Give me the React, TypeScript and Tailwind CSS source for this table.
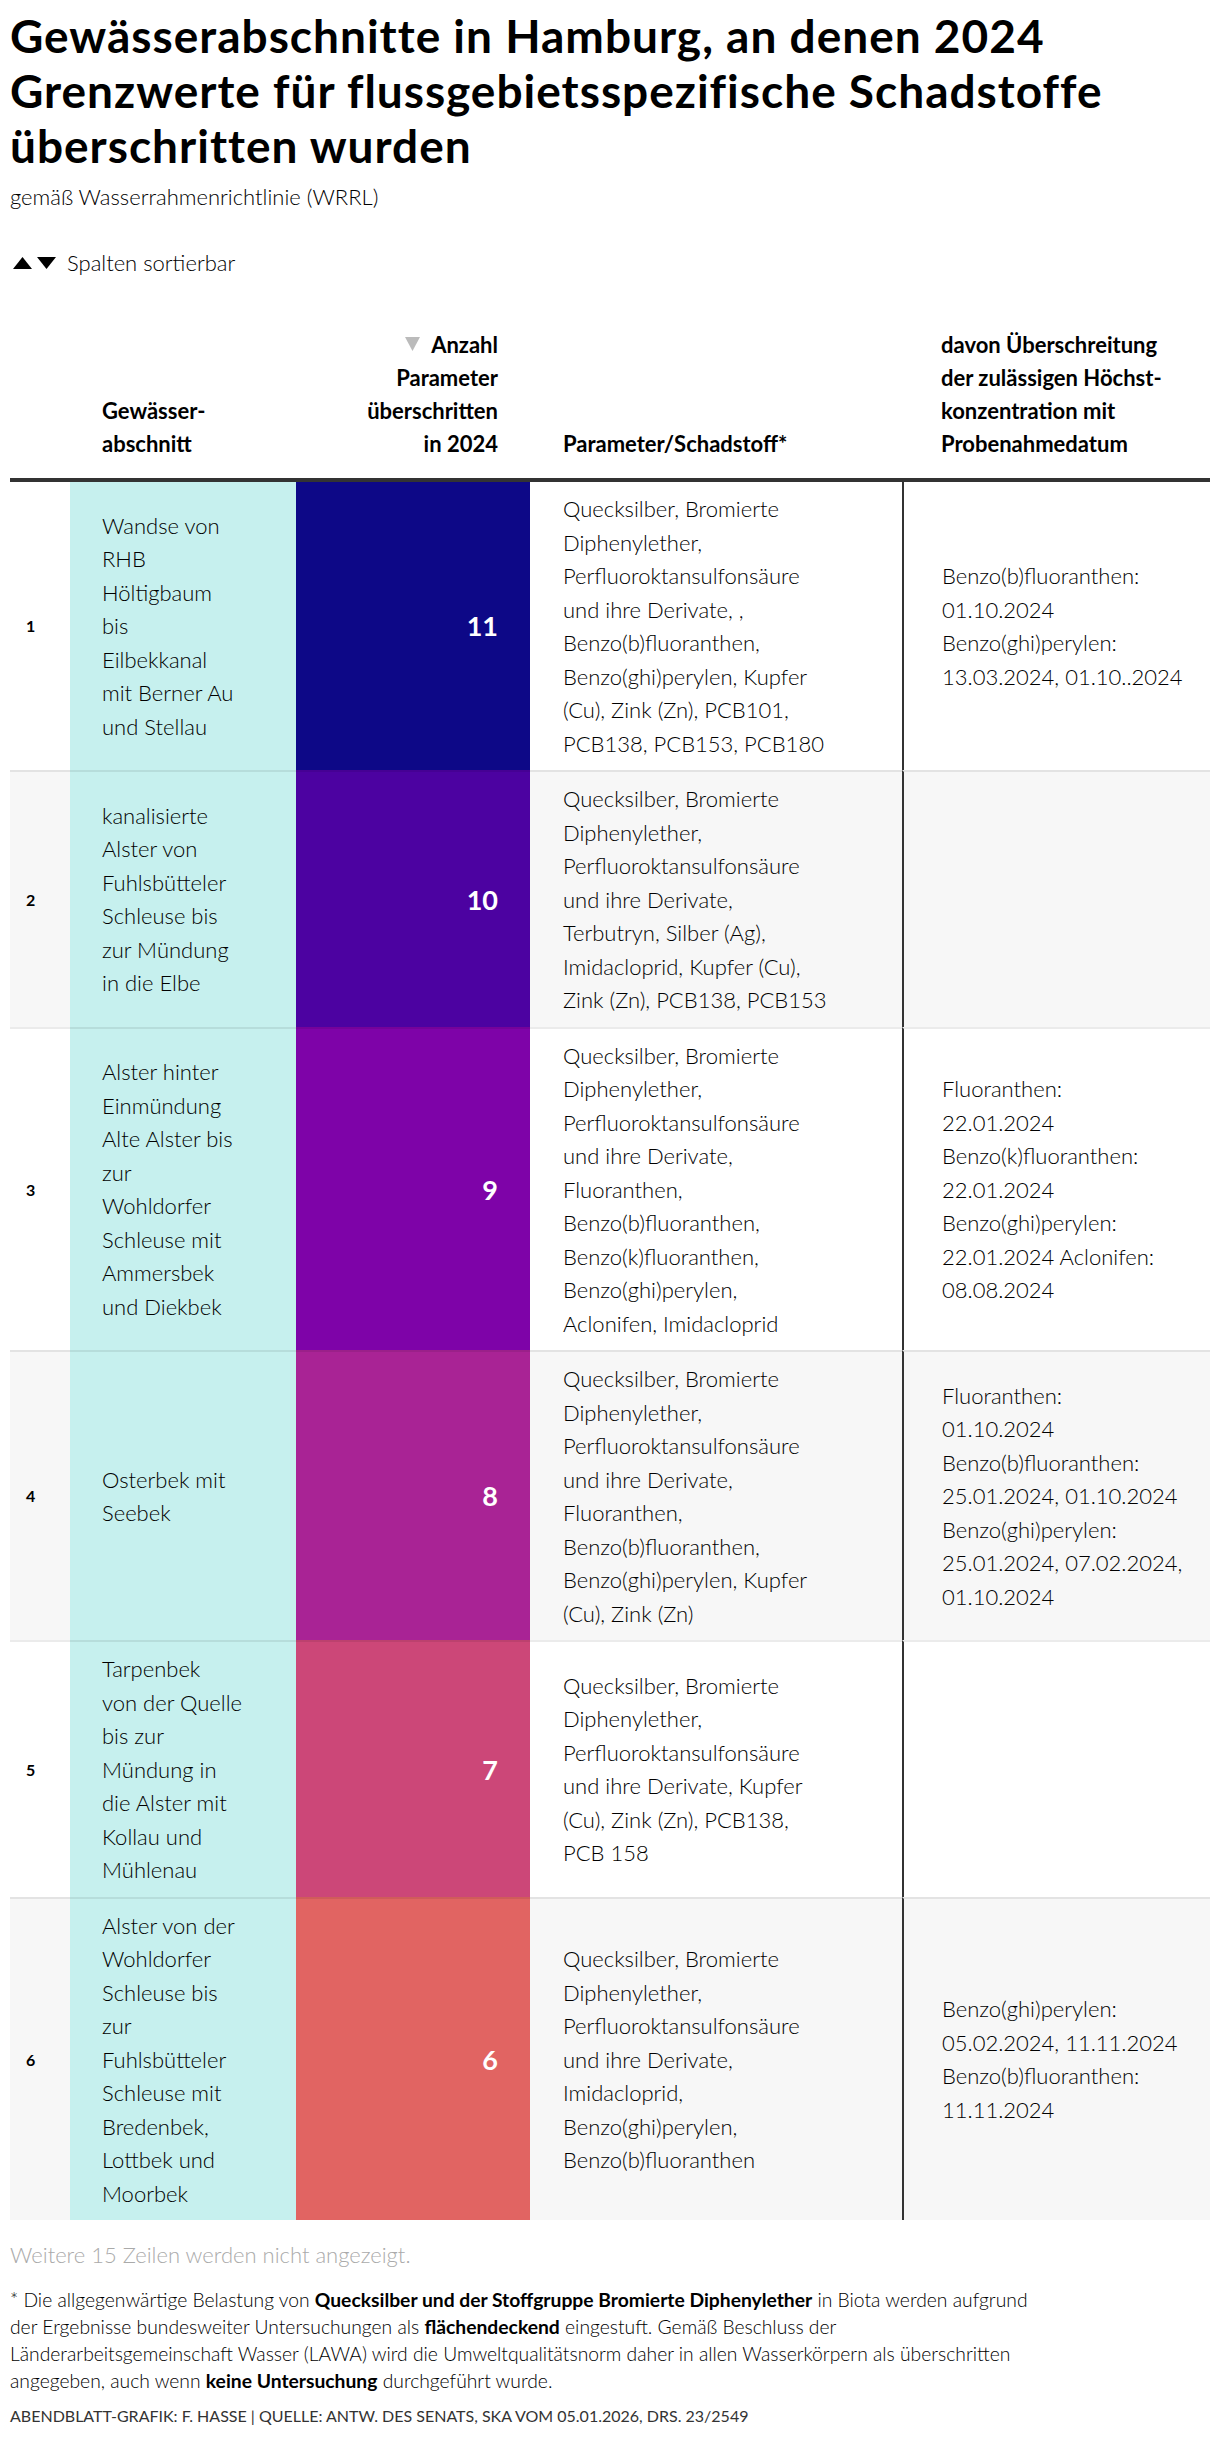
import React from 'react';

type Row = {
  n: number;
  name: string[];
  count: number;
  color: string;
  params: string[];
  dates: string[];
};

const rows: Row[] = [
  {
    n: 1,
    name: ['Wandse von', 'RHB', 'Höltigbaum', 'bis', 'Eilbekkanal', 'mit Berner Au', 'und Stellau'],
    count: 11,
    color: '#0d0887',
    params: [
      'Quecksilber, Bromierte',
      'Diphenylether,',
      'Perfluoroktansulfonsäure',
      'und ihre Derivate, ,',
      'Benzo(b)fluoranthen,',
      'Benzo(ghi)perylen, Kupfer',
      '(Cu), Zink (Zn), PCB101,',
      'PCB138, PCB153, PCB180',
    ],
    dates: ['Benzo(b)fluoranthen:', '01.10.2024', 'Benzo(ghi)perylen:', '13.03.2024, 01.10..2024'],
  },
  {
    n: 2,
    name: ['kanalisierte', 'Alster von', 'Fuhlsbütteler', 'Schleuse bis', 'zur Mündung', 'in die Elbe'],
    count: 10,
    color: '#4c02a1',
    params: [
      'Quecksilber, Bromierte',
      'Diphenylether,',
      'Perfluoroktansulfonsäure',
      'und ihre Derivate,',
      'Terbutryn, Silber (Ag),',
      'Imidacloprid, Kupfer (Cu),',
      'Zink (Zn), PCB138, PCB153',
    ],
    dates: [],
  },
  {
    n: 3,
    name: ['Alster hinter', 'Einmündung', 'Alte Alster bis', 'zur', 'Wohldorfer', 'Schleuse mit', 'Ammersbek', 'und Diekbek'],
    count: 9,
    color: '#7e03a8',
    params: [
      'Quecksilber, Bromierte',
      'Diphenylether,',
      'Perfluoroktansulfonsäure',
      'und ihre Derivate,',
      'Fluoranthen,',
      'Benzo(b)fluoranthen,',
      'Benzo(k)fluoranthen,',
      'Benzo(ghi)perylen,',
      'Aclonifen, Imidacloprid',
    ],
    dates: [
      'Fluoranthen:',
      '22.01.2024',
      'Benzo(k)fluoranthen:',
      '22.01.2024',
      'Benzo(ghi)perylen:',
      '22.01.2024 Aclonifen:',
      '08.08.2024',
    ],
  },
  {
    n: 4,
    name: ['Osterbek mit', 'Seebek'],
    count: 8,
    color: '#a92395',
    params: [
      'Quecksilber, Bromierte',
      'Diphenylether,',
      'Perfluoroktansulfonsäure',
      'und ihre Derivate,',
      'Fluoranthen,',
      'Benzo(b)fluoranthen,',
      'Benzo(ghi)perylen, Kupfer',
      '(Cu), Zink (Zn)',
    ],
    dates: [
      'Fluoranthen:',
      '01.10.2024',
      'Benzo(b)fluoranthen:',
      '25.01.2024, 01.10.2024',
      'Benzo(ghi)perylen:',
      '25.01.2024, 07.02.2024,',
      '01.10.2024',
    ],
  },
  {
    n: 5,
    name: ['Tarpenbek', 'von der Quelle', 'bis zur', 'Mündung in', 'die Alster mit', 'Kollau und', 'Mühlenau'],
    count: 7,
    color: '#cc4778',
    params: [
      'Quecksilber, Bromierte',
      'Diphenylether,',
      'Perfluoroktansulfonsäure',
      'und ihre Derivate, Kupfer',
      '(Cu), Zink (Zn), PCB138,',
      'PCB 158',
    ],
    dates: [],
  },
  {
    n: 6,
    name: [
      'Alster von der',
      'Wohldorfer',
      'Schleuse bis',
      'zur',
      'Fuhlsbütteler',
      'Schleuse mit',
      'Bredenbek,',
      'Lottbek und',
      'Moorbek',
    ],
    count: 6,
    color: '#e16462',
    params: [
      'Quecksilber, Bromierte',
      'Diphenylether,',
      'Perfluoroktansulfonsäure',
      'und ihre Derivate,',
      'Imidacloprid,',
      'Benzo(ghi)perylen,',
      'Benzo(b)fluoranthen',
    ],
    dates: ['Benzo(ghi)perylen:', '05.02.2024, 11.11.2024', 'Benzo(b)fluoranthen:', '11.11.2024'],
  },
];

const Lines: React.FC<{ lines: string[] }> = ({ lines }) => (
  <div className="whitespace-nowrap">
    {lines.map((l, i) => (
      <div key={i}>{l}</div>
    ))}
  </div>
);

const App: React.FC = () => {
  return (
    <div className="w-[1220px] bg-white px-[10px] pt-[8px] pb-[8px] text-black font-['Lato',sans-serif]">
      <h1 className="text-[46px] leading-[55px] font-bold tracking-[1px] text-black">
        Gewässerabschnitte in Hamburg, an denen 2024
        <br />
        Grenzwerte für flussgebietsspezifische Schadstoffe
        <br />
        überschritten wurden
      </h1>
      <p className="mt-[9px] text-[22px] leading-[30px] font-light">
        gemäß Wasserrahmenrichtlinie (WRRL)
      </p>
      <div className="mt-[36px] flex items-center text-[22px] leading-[30px] font-light">
        <svg width="44" height="14" viewBox="0 0 44 14" className="ml-[3px]">
          <polygon points="0,13 9.5,1 19,13" fill="#000" />
          <polygon points="24,1 43,1 33.5,13" fill="#000" />
        </svg>
        <span className="ml-[10px]">Spalten sortierbar</span>
      </div>

      {/* Tabelle */}
      <div className="mt-[50px]">
        <div className="flex items-end border-b-4 border-[#333] pb-[18px] text-[22px] leading-[33px] font-bold text-black">
          <div className="w-[60px]" />
          <div className="w-[226px] pl-[32px]">
            Gewässer-
            <br />
            abschnitt
          </div>
          <div className="w-[234px] pr-[32px] text-right">
            <svg width="15" height="14" viewBox="0 0 15 14" className="inline-block mr-[11px] mb-[6px]">
              <polygon points="0,0 15,0 7.5,14" fill="#bbb" />
            </svg>
            Anzahl
            <br />
            Parameter
            <br />
            überschritten
            <br />
            in 2024
          </div>
          <div className="w-[372px] pl-[33px]">Parameter/Schadstoff*</div>
          <div className="flex-1 pl-[39px]">
            davon Überschreitung
            <br />
            der zulässigen Höchst-
            <br />
            konzentration mit
            <br />
            Probenahmedatum
          </div>
        </div>

        {rows.map((r, i) => {
          const even = i % 2 === 1;
          const sep = i > 0 ? 'border-t-2 border-black/[0.08]' : '';
          return (
            <div key={r.n} className={`flex items-stretch text-[22px] leading-[33.5px] font-light text-black ${even ? 'bg-[#f7f7f7]' : 'bg-white'}`}>
              <div className={`w-[60px] flex items-center pl-[16px] text-[16px] font-bold ${sep}`}>
                {r.n}
              </div>
              <div className={`w-[226px] bg-[#c6f0ee] pl-[32px] py-[10px] flex items-center ${sep}`}>
                <Lines lines={r.name} />
              </div>
              <div
                className={`w-[234px] pr-[32px] flex items-center justify-end text-[27px] font-bold text-white ${sep}`}
                style={{ backgroundColor: r.color }}
              >
                {r.count}
              </div>
              <div className={`w-[372px] pl-[33px] py-[10px] flex items-center ${sep}`}>
                <Lines lines={r.params} />
              </div>
              <div className={`flex-1 border-l-2 border-l-[#333] pl-[38px] py-[10px] flex items-center ${sep}`}>
                <Lines lines={r.dates} />
              </div>
            </div>
          );
        })}
      </div>

      <p className="mt-[20px] text-[22px] leading-[30px] font-light text-[#aaa]">
        Weitere 15 Zeilen werden nicht angezeigt.
      </p>

      <p className="mt-[16px] text-[19.3px] leading-[27px] font-light">
        * Die allgegenwärtige Belastung von <b className="font-bold">Quecksilber und der Stoffgruppe Bromierte Diphenylether</b> in Biota werden aufgrund
        <br />
        der Ergebnisse bundesweiter Untersuchungen als <b className="font-bold">flächendeckend</b> eingestuft. Gemäß Beschluss der
        <br />
        Länderarbeitsgemeinschaft Wasser (LAWA) wird die Umweltqualitätsnorm daher in allen Wasserkörpern als überschritten
        <br />
        angegeben, auch wenn <b className="font-bold">keine Untersuchung</b> durchgeführt wurde.
      </p>
      <p className="mt-[10px] text-[16px] leading-[24px] uppercase text-[#333]">
        Abendblatt-Grafik: F. Hasse | Quelle: Antw. des Senats, SKA vom 05.01.2026, Drs. 23/2549
      </p>
    </div>
  );
};

export default App;
